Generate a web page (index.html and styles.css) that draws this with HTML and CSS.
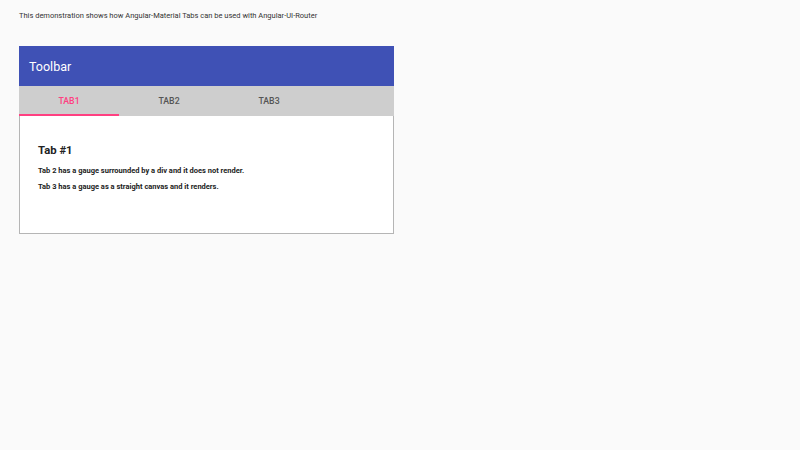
FILE: index.html
```html
<!DOCTYPE html>
<html>
<head>
<meta charset="utf-8">
<link rel="stylesheet" href="styles.css">
</head>
<body>
<p class="intro">This demonstration shows how Angular-Material Tabs can be used with Angular-UI-Router</p>
<div class="card">
  <div class="toolbar">Toolbar</div>
  <div class="tabs">
    <div class="tab active">TAB1</div>
    <div class="tab">TAB2</div>
    <div class="tab">TAB3</div>
  </div>
  <div class="content">
    <h2 class="title">Tab #1</h2>
    <p class="line">Tab 2 has a gauge surrounded by a div and it does not render.</p>
    <p class="line">Tab 3 has a gauge as a straight canvas and it renders.</p>
  </div>
</div>
</body>
</html>
```
FILE: styles.css
```css
html, body {
  margin: 0;
  padding: 0;
  background: #fafafa;
  font-family: Roboto, "Noto Sans", sans-serif;
  color: #212121;
}
body {
  padding: 10px 19px;
}
.intro {
  margin: 0;
  font-size: 7.5px;
  line-height: 12px;
  color: #333;
}
.card {
  margin-top: 24px;
  width: 375px;
}
.toolbar {
  background: #3f51b5;
  color: #fff;
  height: 40px;
  display: flex;
  align-items: center;
  padding-left: 10px;
  font-size: 12.5px;
}
.tabs {
  display: flex;
  height: 30px;
  background: #cecece;
}
.tab {
  width: 100px;
  display: flex;
  align-items: center;
  justify-content: center;
  font-size: 8.75px;
  font-weight: 500;
  color: #555;
  box-sizing: border-box;
}
.tab.active {
  color: #ff4081;
  border-bottom: 2px solid #ff4081;
  padding-top: 2px;
}
.content {
  background: #fff;
  border: 1px solid #b5b5b5;
  border-top: none;
  height: 118px;
  padding: 27px 18px 0;
  box-sizing: border-box;
}
.title {
  margin: 0 0 7px;
  font-size: 11.3px;
  font-weight: 700;
  line-height: 15px;
  color: #222;
}
.line {
  margin: 0 0 5px;
  font-size: 7.5px;
  font-weight: 700;
  line-height: 11px;
  color: #222;
}
```
